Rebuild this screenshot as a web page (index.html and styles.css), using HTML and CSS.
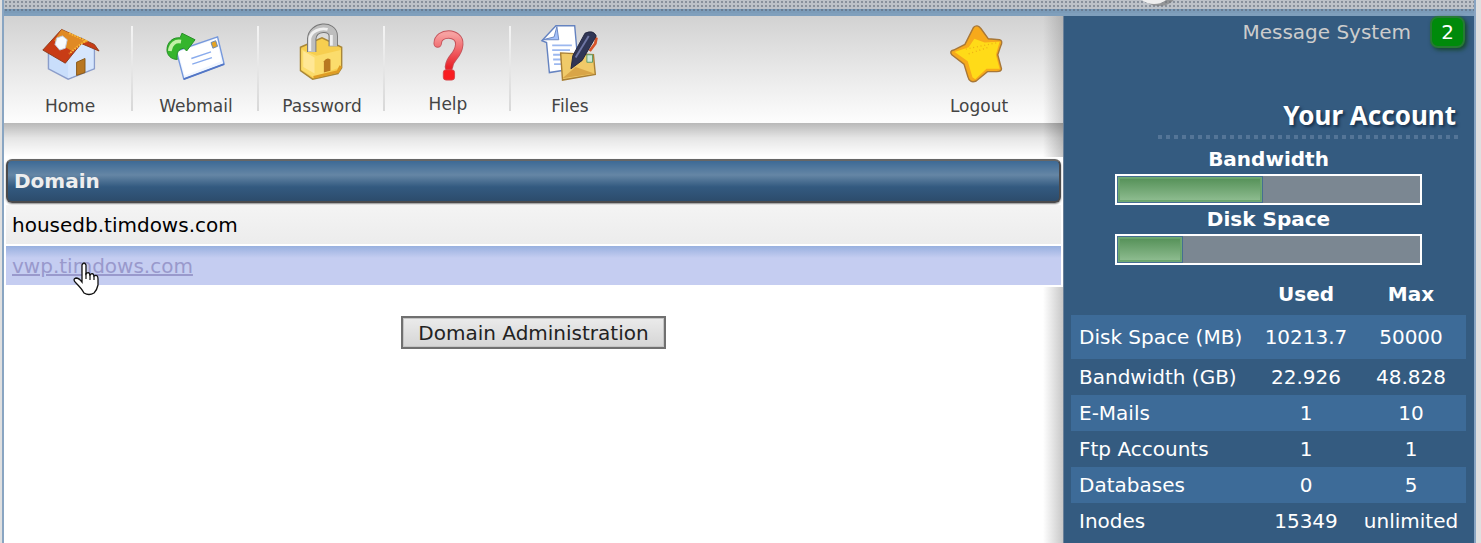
FILE: index.html
```html
<!DOCTYPE html>
<html lang="en">
<head>
  <meta charset="UTF-8" />
  <title>Control Panel</title>
  <meta name="viewport" content="width=device-width, initial-scale=1.0"/>
  <link rel="stylesheet" href="styles.css">
</head>
<body>
  <div class="page">
    <header class="topbar">
      <svg class="logo" width="40" height="8" viewBox="0 0 40 8">
        <ellipse cx="23" cy="-6" rx="17" ry="12" fill="#777" opacity=".6"/>
        <ellipse cx="18" cy="-8" rx="16" ry="12" fill="#eee"/>
      </svg>
    </header>
    <div class="columns">
      <main class="main">
        <nav class="nav">
          <a href="#">
            <svg width="60" height="60" viewBox="0 -3 64 64">
              <path d="M9 30V48L30 59 58 48V25L44 15 29 37Z" fill="#c9defb" stroke="#8b9dca" stroke-width="1.5"/>
              <path d="M30 39L44 20 57 28V47L30 58Z" fill="#d6e6fd"/>
              <path d="M39 41L48 37V52L39 55Z" fill="#b87722" stroke="#865719"/>
              <path d="M23 6L3 28 27 42 44 21 63 29 58 22Z" fill="#c83c16" stroke="#8e3c1a" stroke-width="1"/>
              <path d="M23 6L52 19 44 21 34 29 15 18Z" fill="#e08a24"/>
              <path d="M31 10L49 18 43 22 31 32" stroke="#f9b735" stroke-width="2" stroke-dasharray="2 1" fill="none"/>
              <path d="M18 15L24 13 29 17 27 26 21 28 16 22Z" fill="#f7fbff" stroke="#becbe0"/>
            </svg>
            <span>Home</span>
          </a>
          <a href="#">
            <svg width="60" height="60" viewBox="1 -4 64 64">
              <path d="M12 28L56 13 63 42 20 58Z" fill="#f0f6ff" stroke="#7799dc" stroke-width="1.5"/>
              <path d="M14 29L55 15 60 39 21 54Z" fill="#fff"/>
              <path d="M20 58L63 42" stroke="#5276c5" stroke-width="2"/>
              <path d="M28 36L49 29M29 42L50 35" stroke="#8aaced" stroke-width="1.5"/>
              <path d="M49 19L54 17 56 23 51 25Z" fill="#e5a323" stroke="#6788b2"/>
              <path d="M2 27C2 18 9 13 16 14L18 9 32 16 23 28 20 25C14 26 12 30 13 37C6 37 2 32 2 27Z" fill="#35b52d" stroke="#238d24"/>
              <path d="M5 28C6 20 11 17 17 18" fill="none" stroke="#c4f0a8" stroke-width="4"/>
            </svg>
            <span>Webmail</span>
          </a>
          <a href="#">
            <svg width="60" height="60" viewBox="1 -2 64 64">
              <path d="M10 26L33 16 54 26V48L50 54 23 60 10 51Z" fill="#f7ce4f" stroke="#a98738" stroke-width="1.5"/>
              <path d="M11 28L27 35 53 29V47L24 58 11 50Z" fill="#fbdc6c"/>
              <path d="M13 30L25 37V54L13 47Z" fill="#ffe795"/>
              <path d="M24 58L50 52 53 46" fill="none" stroke="#df9c24" stroke-width="3"/>
              <path d="M22 31V17C23 3 45 2 45 14V25" fill="none" stroke="#777" stroke-width="10"/>
              <path d="M22 31V17C23 3 45 2 45 14V25" fill="none" stroke="#bebebe" stroke-width="8"/>
              <path d="M20 30V17C21 9 31 5 39 7M43 13V24" fill="none" stroke="#f0f0f0" stroke-width="3"/>
              <path d="M35 41Q38 36 42 39V51L35 53Z" fill="#b97820"/>
            </svg>
            <span>Password</span>
          </a>
          <a href="#">
            <svg width="60" height="60" viewBox="0 -3 64 64">
              <defs>
                <linearGradient id="red" x2="0" y2="1"><stop stop-color="#f7a0a0"/><stop offset="1" stop-color="#e9232a"/></linearGradient>
              </defs>
              <path d="M21 21C21 8 45 8 44 22C43 35 34 35 33 46" fill="none" stroke="#c4555c" stroke-width="9" stroke-linecap="round"/>
              <path d="M21 21C21 8 45 8 44 22C43 35 34 35 33 46" fill="none" stroke="url(#red)" stroke-width="7" stroke-linecap="round"/>
              <rect x="27" y="49" width="12" height="11" rx="3" fill="#f91d21" stroke="#d5474c"/>
            </svg>
            <span class="raised">Help</span>
          </a>
          <a href="#" class="last">
            <svg width="60" height="60" viewBox="2 -1 64 64">
              <path d="M4 20L19 4H39L43 49 12 54 9 22Z" fill="#fff" stroke="#6583c0" stroke-width="1.5"/>
              <path d="M5 19L17 16 20 5 22 19Z" fill="#a4c1fa" stroke="#6583c0"/>
              <path d="M15 25H36M15 30H34M16 35H32M16 40H26M17 45H25" stroke="#9cb8ef" stroke-width="2"/>
              <path d="M24 33L59 35 61 56 26 62Z" fill="#f0ca69" stroke="#aa8035" stroke-width="1.5"/>
              <path d="M26 60L40 48 60 55Z" fill="#d9a547"/>
              <path d="M52 35H58V43H52Z" fill="#cee8d8" stroke="#5c9b65"/>
              <path d="M52 13L62 18 61 23 55 31" fill="none" stroke="#d65329" stroke-width="3"/>
              <path d="M35 50L37 36 50 12Q59 8 62 15L47 41Z" fill="#303655" stroke="#20243d"/>
              <path d="M40 38L54 15" stroke="#6f77a4" stroke-width="2"/>
            </svg>
            <span>Files</span>
          </a>
          <a href="#" class="logout">
            <svg width="60" height="60" viewBox="2 0 64 64">
              <path d="M28 7Q32 3 36 8L44 19 56 20Q60 21 57 27L54 36 58 51Q58 54 53 54L43 54 31 64Q24 67 22 59L18 46 5 36Q2 32 7 31L19 25Z" fill="#f7a91b" stroke="#a87737" stroke-width="1.5"/>
              <path d="M29 19L40 23 56 22 52 36 56 51 42 51 30 62 27 60 22 43 8 33 23 28Z" fill="#ffdb18"/>
              <path d="M20 30L54 23M23 35L44 28" stroke="#edae17" stroke-width="1.5" stroke-dasharray="1 3"/>
            </svg>
            <span>Logout</span>
          </a>
        </nav>
        <div class="nav-shadow"></div>
        <table class="domains">
          <thead>
            <tr><th>Domain</th></tr>
          </thead>
          <tbody>
            <tr><td><a href="#">housedb.timdows.com</a></td></tr>
            <tr class="hover">
              <td>
                <a href="#">vwp.timdows.com</a>
                <svg class="pointer" width="28" height="34" viewBox="0 0 28 34">
                  <path d="M9 3Q11 -1 13 3V12Q16 9 17 13Q20 10 21 14Q25 12 25 17V23Q24 28 21 31Q16 34 11 31Q9 27 3 21Q-1 17 3 16Q6 16 9 20Z" fill="#fff" stroke="#111" stroke-width="1.3"/>
                  <path d="M13 11V17M17 12V18M21 14V18" stroke="#111" stroke-width="1.2"/>
                </svg>
              </td>
            </tr>
          </tbody>
        </table>
        <div class="actions">
          <button type="button">Domain Administration</button>
        </div>
      </main>
      <aside class="sidebar">
        <div class="messages">
          <a href="#">Message System</a>
          <a href="#" class="badge">2</a>
        </div>
        <h2>Your Account</h2>
        <div class="dots"></div>
        <div class="meters">
          <h3>Bandwidth</h3>
          <div class="meter"><div class="fill" style="width: 46.95%"></div></div>
          <h3>Disk Space</h3>
          <div class="meter"><div class="fill" style="width: 20.43%"></div></div>
        </div>
        <table class="usage">
          <thead>
            <tr><th></th><th>Used</th><th>Max</th></tr>
          </thead>
          <tbody>
            <tr class="tall"><td>Disk Space (MB)</td><td>10213.7</td><td>50000</td></tr>
            <tr><td>Bandwidth (GB)</td><td>22.926</td><td>48.828</td></tr>
            <tr><td>E-Mails</td><td>1</td><td>10</td></tr>
            <tr><td>Ftp Accounts</td><td>1</td><td>1</td></tr>
            <tr><td>Databases</td><td>0</td><td>5</td></tr>
            <tr><td>Inodes</td><td>15349</td><td>unlimited</td></tr>
          </tbody>
        </table>
      </aside>
    </div>
  </div>
</body>
</html>
```
FILE: styles.css
```css
* { box-sizing: border-box; }
body { margin: 0; background: #e0e0e0; font-family: Verdana, "DejaVu Sans", sans-serif; font-size: 20px; line-height: 24px; color: #000; }
a { color: inherit; text-decoration: none; }
table { border-collapse: collapse; width: 100%; }
td, th { padding: 0; }

.page {
  display: flex;
  flex-direction: column;
  min-height: 100vh;
  margin: 0 5px 0 2px;
  border: solid #89a5c2;
  border-width: 0 2px;
  background: #fff;
}
.topbar {
  height: 16px;
  padding-right: 298px;
  background:
    linear-gradient(transparent 13px, #7f9fbc 13px),
    radial-gradient(circle, rgba(85, 95, 110, 0.5) 1px, transparent 1px) 0 0 / 4px 4px,
    linear-gradient(#bdc2c8 9px, #7b9bb8 9px);
}
.logo { display: block; margin-left: auto; }
.columns { display: flex; flex: 1; }

/* left side */
.main {
  flex: 1;
  background: linear-gradient(to left, #c8c8c8, #fff 20px);
}
.nav {
  display: flex;
  height: 107px;
  padding: 0 21px 0 3px;
  background:
    linear-gradient(to left, rgba(120, 120, 120, 0.35), transparent 20px),
    linear-gradient(#d2d2d2, #fdfdfd);
}
.nav a {
  display: flex;
  flex-direction: column;
  align-items: center;
  justify-content: space-between;
  width: 126px;
  padding: 5px 0;
  color: #444;
  font-size: 17px;
  background: linear-gradient(#f4f4f4, #d8d8d8) right 10px / 2px 85px no-repeat;
}
.nav svg { overflow: visible; }
.nav .raised { padding-bottom: 2px; }
.nav .last { width: 118px; background: none; }
.nav .logout { margin-left: auto; background: none; }
.nav-shadow {
  height: 34px;
  background: linear-gradient(rgba(0, 0, 0, 0.28), rgba(0, 0, 0, 0.1) 15px, transparent);
}

.domains {
  border-collapse: separate;
  border-spacing: 2px;
  background: #fff;
}
.domains th {
  height: 44px;
  padding: 0 6px;
  border: 2px solid #4a4a4c;
  border-top-color: #666;
  border-radius: 6px;
  background: linear-gradient(#3d6a96, #6586a5 35%, #335a80 65%, #2c4c6c);
  box-shadow: 0 1px 2px #888;
  color: #eee;
  text-align: left;
}
.domains td {
  position: relative;
  height: 39px;
  padding: 0 6px;
  background: linear-gradient(#f4f4f4, #ececec);
}
.domains .hover td { background: linear-gradient(#98b0df, #c5cdf1 12px); color: #99c; }
.domains .hover a { text-decoration: underline; }
.pointer { position: absolute; left: 67px; top: 16px; }
.actions { padding-top: 29px; text-align: center; }
button {
  height: 33px;
  padding: 0 15px;
  border: 2px solid #707070;
  background: linear-gradient(#ebebeb, #d5d5d5);
  box-shadow: inset 0 0 0 1px #c4c4c4;
  color: #222;
  font: inherit;
}

/* right side */
.sidebar { flex: 0 0 411px; padding: 0 8px 0 7px; border-left: 1px solid #6b8199; background: #345b80; color: #fff; }
.messages {
  display: flex;
  justify-content: flex-end;
  align-items: center;
  gap: 19px;
  height: 32px;
  padding-right: 1px;
  color: #ccc;
}
.badge {
  width: 35px;
  padding: 2px 0;
  border: 2px solid #267a34;
  border-radius: 8px;
  background: #008a0b;
  box-shadow: 2px 2px 4px #14472c;
  color: #fff;
  text-align: center;
}
h2 {
  margin: 51px 10px 0 0;
  font: bold 26px/32px "Noto Sans", sans-serif;
  text-align: right;
  text-shadow: 2px 2px 3px #16304c;
}
.dots {
  width: 300px;
  height: 4px;
  margin: 4px 8px 0 auto;
  background: repeating-linear-gradient(to right, #547597 0 4px, transparent 4px 8px);
}
.meters { padding: 6px 44px 0; }
h3 { margin: 0; font-size: 20px; line-height: 29px; text-align: center; }
.meter { height: 31px; border: 2px solid #fff; background: #7b8792; }
.fill {
  box-sizing: content-box;
  height: 23px;
  border: 1px solid #6fa873;
  outline: 1px solid #456f91;
  margin: 1px;
  background: linear-gradient(#559158, #8fbd91);
  box-shadow: inset 0 0 0 1px #69a56c;
}
.usage { margin-top: 7px; table-layout: fixed; }
.usage th { height: 43px; }
.usage th:nth-child(2) { width: 100px; }
.usage th:nth-child(3) { width: 110px; }
.usage td { height: 36px; text-align: center; }
.usage td:first-child { padding-left: 8px; text-align: left; white-space: nowrap; }
.usage .tall td { height: 44px; }
.usage tbody tr:nth-child(odd) { background: #3d6b98; }
```
